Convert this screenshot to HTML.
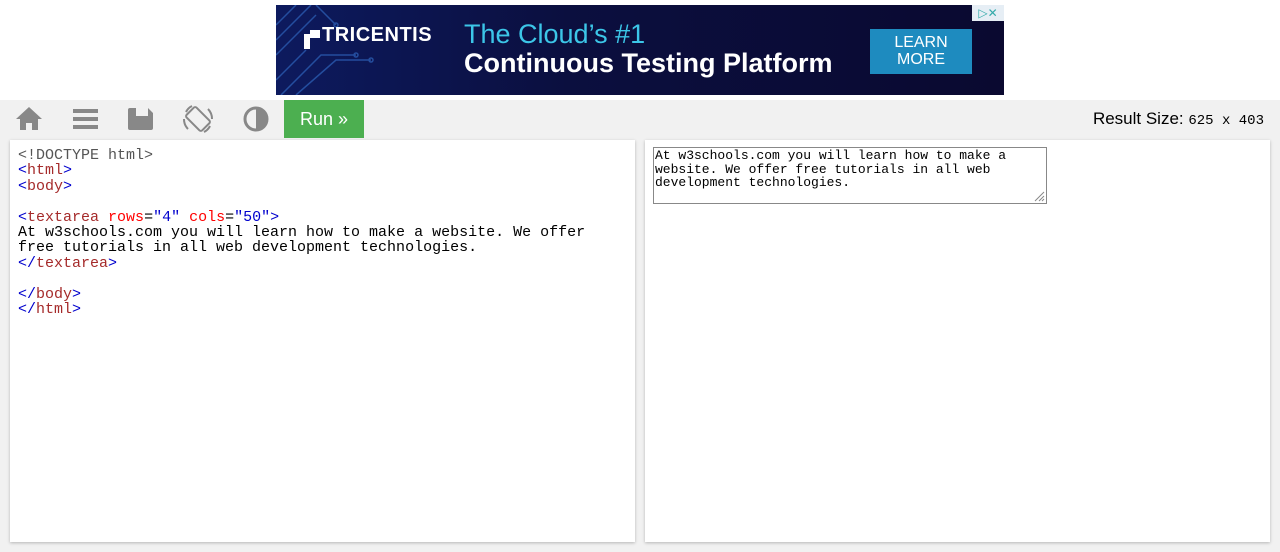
<!DOCTYPE html>
<html><head><style>
body{margin:0;width:1280px;height:552px;background:#f1f1f1;font-family:"Liberation Sans",sans-serif;position:relative;overflow:hidden}
.top{position:absolute;left:0;top:0;width:1280px;height:100px;background:#fff}
.ad{position:absolute;left:276px;top:5px;width:728px;height:90px;background:linear-gradient(90deg,#0d1a5e 0%,#0b0f3f 40%,#0a0930 100%);overflow:hidden}
.tb{position:absolute;top:100px;height:38px;width:1280px}
.run{position:absolute;left:284px;top:100px;width:80px;height:38px;background:#4caf50;color:#fff;font-size:18px;line-height:39px;text-align:center}
.pane{position:absolute;top:140px;height:402px;background:#fff;box-shadow:0 1px 3px rgba(0,0,0,.25)}
pre{margin:0;font-family:"Liberation Mono",monospace;font-size:15px;line-height:15.4px;color:#000;position:absolute;left:8px;top:8px}
.t{color:#a52a2a}.b{color:#0000cd}.a{color:#f00}.v{color:#0000cd}.g{color:#555}
</style></head><body>
<div class="top"></div>
<div class="ad">
<svg width="728" height="90" style="position:absolute;left:0;top:0">
<g stroke="#2a5bb0" stroke-width="1.5" fill="none" opacity=".8">
<path d="M0 20 L20 0 M0 35 L35 0 M0 50 L40 10 M5 90 L45 50 L80 50 M20 90 L60 55 L95 55 M0 75 L30 45 M40 0 L60 20"/>
<circle cx="80" cy="50" r="2"/><circle cx="95" cy="55" r="2"/><circle cx="60" cy="20" r="2"/>
</g>
<path d="M28 29 h6 v-4 h10 v8 h-10 v11 h-6z" fill="#fff"/>
</svg>
<div style="position:absolute;left:46px;top:19px;color:#fff;font-weight:bold;font-size:20px;letter-spacing:.5px">TRICENTIS</div>
<div style="position:absolute;left:188px;top:14px;color:#3cc6e8;font-size:27px">The Cloud’s #1</div>
<div style="position:absolute;left:188px;top:43px;color:#fff;font-size:27px;font-weight:bold">Continuous Testing Platform</div>
<div style="position:absolute;left:594px;top:24px;width:102px;height:45px;background:#1e8bbf;color:#fff;font-size:16px;text-align:center;line-height:17px;padding-top:5px;box-sizing:border-box">LEARN<br>MORE</div>
<div style="position:absolute;right:0;top:0;width:32px;height:16px;background:#e6eef5;color:#3aa;font-size:12px;line-height:16px;text-align:center">▷✕</div>
</div>
<div class="tb">
<svg width="280" height="38" style="position:absolute;left:0;top:0" fill="#888">
<path d="M16 19 L29 7 L42 19 h-4 v11 h-6 v-7 h-6 v7 h-6 v-11z"/>
<rect x="73" y="9" width="25" height="4"/><rect x="73" y="17" width="25" height="4"/><rect x="73" y="25" width="25" height="4"/>
<path d="M130 8 h18 l5 5 v15 a2 2 0 0 1 -2 2 h-21 a2 2 0 0 1 -2 -2 v-18 a2 2 0 0 1 2 -2z M136 8 v8 h12 v-8z" fill-rule="evenodd"/>
<g fill="none" stroke="#888" stroke-width="2"><rect x="191" y="8" width="14" height="22" rx="2" transform="rotate(-45 198 19)"/><path d="M186 12 a13 13 0 0 1 6 -6 M210 26 a13 13 0 0 1 -6 6 M184 19 a14 14 0 0 0 4 10 M212 19 a14 14 0 0 0 -4 -10"/></g>
<circle cx="256" cy="19" r="11" fill="none" stroke="#888" stroke-width="3"/><path d="M256 8 a11 11 0 0 1 0 22z"/>
</svg>
<div style="position:absolute;right:16px;top:9px;font-size:17px;color:#000">Result Size: <span style="font-family:'Liberation Mono',monospace;font-size:14px">625 x 403</span></div>
</div>
<div class="run">Run »</div>
<div class="pane" style="left:10px;width:625px">
<pre><span class="g">&lt;!DOCTYPE html&gt;</span>
<span class="b">&lt;</span><span class="t">html</span><span class="b">&gt;</span>
<span class="b">&lt;</span><span class="t">body</span><span class="b">&gt;</span>

<span class="b">&lt;</span><span class="t">textarea</span> <span class="a">rows</span>=<span class="v">"4"</span> <span class="a">cols</span>=<span class="v">"50"</span><span class="b">&gt;</span>
At w3schools.com you will learn how to make a website. We offer
free tutorials in all web development technologies.
<span class="b">&lt;/</span><span class="t">textarea</span><span class="b">&gt;</span>

<span class="b">&lt;/</span><span class="t">body</span><span class="b">&gt;</span>
<span class="b">&lt;/</span><span class="t">html</span><span class="b">&gt;</span></pre>
</div>
<div class="pane" style="left:645px;width:625px">
<div style="position:absolute;left:8px;top:7px;width:394px;height:57px;border:1px solid #888;box-sizing:border-box;padding:1px 1px;font-family:'Liberation Mono',monospace;font-size:13px;line-height:13.5px">At w3schools.com you will learn how to make a website. We offer free tutorials in all web development technologies.
<svg width="12" height="12" style="position:absolute;right:1px;bottom:1px"><path d="M11 2 L2 11 M11 6 L6 11 M11 9 L9 11" stroke="#888"/></svg></div>
</div>
</body></html>
